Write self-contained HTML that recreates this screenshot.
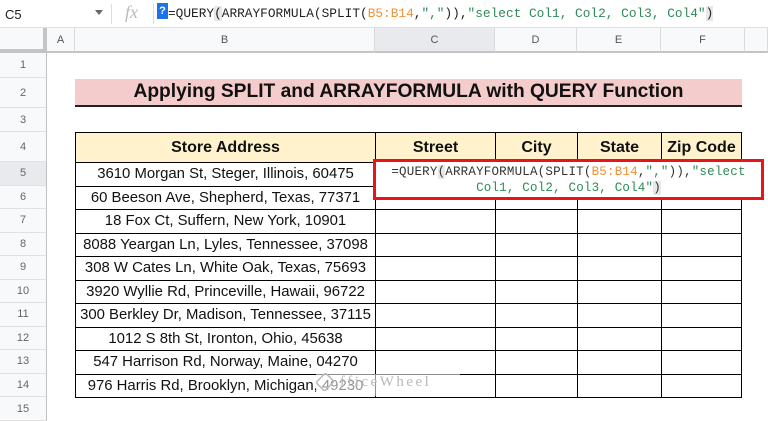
<!DOCTYPE html>
<html><head><meta charset="utf-8"><style>
*{margin:0;padding:0;box-sizing:border-box}
body{width:768px;height:421px;overflow:hidden;background:#fff;font-family:"Liberation Sans",Arial,sans-serif;position:relative}
.a{position:absolute}
.rh{position:absolute;left:0;width:47px;background:#f8f9fa;border-bottom:1px solid #e0e0e0;border-right:1px solid #c0c0c0;color:#666;font-size:11px;display:flex;align-items:center;justify-content:center}
.ch{position:absolute;top:28px;height:25px;background:#f8f9fa;border-right:1px solid #dadada;border-bottom:2px solid #c4c4c4;color:#555;font-size:11px;display:flex;align-items:center;justify-content:center}
.c{position:absolute;border:1px solid #000;display:flex;align-items:center;justify-content:center;font-size:14.9px;color:#111;white-space:nowrap}
.h{background:#fff2cc;font-weight:bold;font-size:16px}
.mono{font-family:"Liberation Mono",monospace;font-size:12.5px;letter-spacing:0.2px}
.o{color:#e8943a}.g{color:#2e8b57}
</style></head><body>
<div class="a" style="left:0;top:0;width:768px;height:28px;border-bottom:1px solid #e0e0e0;"></div>
<div class="a" style="left:5px;top:7px;font-size:13px;color:#222">C5</div>
<div class="a" style="left:95px;top:10px;width:0;height:0;border-left:4px solid transparent;border-right:4px solid transparent;border-top:5px solid #666"></div>
<div class="a" style="left:111px;top:4px;width:1px;height:20px;background:#ddd"></div>
<div class="a" style="left:125px;top:2px;font-family:'Liberation Serif',serif;font-style:italic;font-size:18px;color:#bbb">fx</div>
<div class="a" style="left:153px;top:4px;width:1px;height:20px;background:#ddd"></div>
<div class="a" style="left:157px;top:3px;width:11px;height:16px;background:#1a73e8;color:#fff;font-size:11px;font-weight:bold;text-align:center;line-height:16px">?</div>
<div class="a mono" style="left:168px;top:6px;color:#222;font-size:12.8px;letter-spacing:0px;white-space:nowrap">=QUERY<span style="background:#e8e8e8">(</span>ARRAYFORMULA(SPLIT(<span class="o">B5:B14</span>,<span class="g">","</span>)),<span class="g">"select Col1, Col2, Col3, Col4"</span><span style="background:#e8e8e8">)</span></div>
<div class="a" style="left:0;top:28px;width:47px;height:25px;background:#f8f9fa;border-right:4px solid #c4c4c4;border-bottom:4px solid #c4c4c4"></div>
<div class="ch" style="left:47px;width:28px">A</div>
<div class="ch" style="left:75px;width:300px">B</div>
<div class="ch" style="left:375px;width:120px;background:#e8eaed">C</div>
<div class="ch" style="left:495px;width:82px">D</div>
<div class="ch" style="left:577px;width:84px">E</div>
<div class="ch" style="left:661px;width:84px">F</div>
<div class="ch" style="left:745px;width:23px"></div>
<div class="rh" style="top:53px;height:25px">1</div>
<div class="rh" style="top:78px;height:30px">2</div>
<div class="rh" style="top:108px;height:24px">3</div>
<div class="rh" style="top:132px;height:30px">4</div>
<div class="rh" style="top:162px;height:23.5px;background:#e8eaed">5</div>
<div class="rh" style="top:185.5px;height:23.5px">6</div>
<div class="rh" style="top:209px;height:23.5px">7</div>
<div class="rh" style="top:232.5px;height:23.5px">8</div>
<div class="rh" style="top:256px;height:23.5px">9</div>
<div class="rh" style="top:279.5px;height:23.5px">10</div>
<div class="rh" style="top:303px;height:23.5px">11</div>
<div class="rh" style="top:326.5px;height:23.5px">12</div>
<div class="rh" style="top:350px;height:23.5px">13</div>
<div class="rh" style="top:373.5px;height:23.5px">14</div>
<div class="rh" style="top:397px;height:24px">15</div>
<div class="a" style="left:75px;top:79px;width:667px;height:28px;background:#f4cccc;border-bottom:2px solid #222;display:flex;align-items:center;justify-content:center;font-weight:bold;font-size:19.2px;color:#111;white-space:nowrap">Applying SPLIT and ARRAYFORMULA with QUERY Function</div>
<div class="c h" style="left:75px;top:132px;width:301px;height:31px">Store Address</div>
<div class="c h" style="left:375px;top:132px;width:121px;height:31px">Street</div>
<div class="c h" style="left:495px;top:132px;width:83px;height:31px">City</div>
<div class="c h" style="left:577px;top:132px;width:85px;height:31px">State</div>
<div class="c h" style="left:661px;top:132px;width:81px;height:31px">Zip Code</div>
<div id="rows"></div>
<script>
var d=["3610 Morgan St, Steger, Illinois, 60475","60 Beeson Ave, Shepherd, Texas, 77371","18 Fox Ct, Suffern, New York, 10901","8088 Yeargan Ln, Lyles, Tennessee, 37098","308 W Cates Ln, White Oak, Texas, 75693","3920 Wyllie Rd, Princeville, Hawaii, 96722","300 Berkley Dr, Madison, Tennessee, 37115","1012 S 8th St, Ironton, Ohio, 45638","547 Harrison Rd, Norway, Maine, 04270","976 Harris Rd, Brooklyn, Michigan, 49230"];
var h="",cols=[[375,121],[495,83],[577,85],[661,81]];
for(var i=0;i<10;i++){var t=162+i*23.5;
h+='<div class="c" style="left:75px;top:'+t+'px;width:301px;height:24.5px">'+d[i]+'</div>';
for(var j=0;j<4;j++)h+='<div class="c" style="left:'+cols[j][0]+'px;top:'+t+'px;width:'+cols[j][1]+'px;height:24.5px"></div>';}
document.getElementById("rows").outerHTML=h;
</script>
<div class="a" style="left:373px;top:159px;width:391px;height:41px;border:3px solid #e8141a;background:#fff"></div>
<div class="a mono" style="left:376px;top:164px;width:385px;text-align:center;line-height:16px;color:#333;white-space:nowrap">=QUERY<span style="background:#e8e8e8">(</span>ARRAYFORMULA(SPLIT(<span class="o">B5:B14</span>,<span class="g">","</span>)),<span class="g">"select</span><br><span class="g">Col1, Col2, Col3, Col4"</span><span style="background:#e8e8e8">)</span></div>
<div class="a" style="left:316px;top:374px;width:144px;height:22px;background:rgba(255,255,255,0.55)"></div>
<div class="a" style="left:316px;top:372px;width:18px;height:20px;border:2px solid #bbb;border-radius:3px;transform:rotate(45deg) scale(0.75)"></div>
<div class="a" style="left:340px;top:374px;font-family:'Liberation Serif',serif;font-size:15px;letter-spacing:2.5px;color:#b8b8b8">fficeWheel</div>
</body></html>
